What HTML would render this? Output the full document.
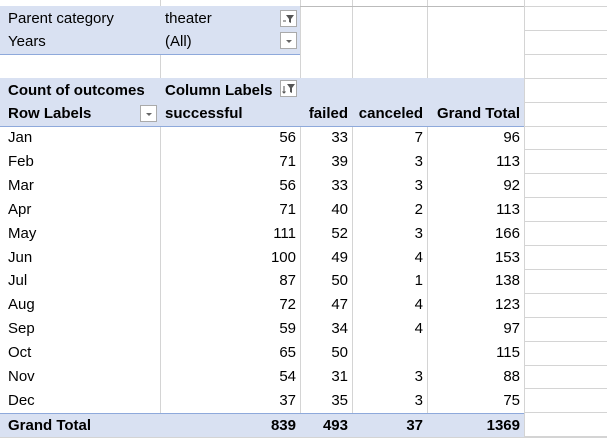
<!DOCTYPE html><html><head><style>
body{margin:0;width:607px;height:447px;overflow:hidden;background:#fff;font-family:"Liberation Sans",sans-serif;font-size:15px;color:#000;position:relative}
.r{position:absolute;left:0;width:607px;height:24px;border-bottom:1px solid #d4d4d4;box-sizing:border-box}
.c{position:absolute;top:0;height:24px;line-height:23px;white-space:nowrap;box-sizing:border-box;padding:0 4px}
.v{position:absolute;top:0;width:1px;height:447px;background:#d4d4d4}
.b{font-weight:bold}
.rt{text-align:right}
.btn{position:absolute;width:17px;height:17px;border:1px solid #aaa;background:#fff;box-sizing:border-box}
</style></head><body>
<div class="v" style="left:160px"></div><div class="v" style="left:300px"></div><div class="v" style="left:352px"></div><div class="v" style="left:427px"></div><div class="v" style="left:524px"></div>
<div style="position:absolute;left:0;top:0;width:607px;height:6px;border-bottom:1px solid #bbb"></div>
<!-- filter area -->
<div style="position:absolute;left:0;top:6px;width:300px;height:48px;background:#d9e1f2;border-bottom:1px solid #8ea9db"></div>
<div class="c" style="left:4px;top:7px">Parent category</div><div class="c" style="left:161px;top:7px">theater</div>
<div class="c" style="left:4px;top:30px">Years</div><div class="c" style="left:161px;top:30px">(All)</div>
<div class="btn" style="left:280px;top:10px"><svg width="15" height="15"><path d="M5 4h8l-3 4v4l-2-1V8z" fill="#555"/><path d="M2 10h3" stroke="#555"/></svg></div>
<div class="btn" style="left:280px;top:32px"><svg width="15" height="15"><path d="M5 7h6l-3 3z" fill="#666"/></svg></div>
<!-- pivot header -->
<div style="position:absolute;left:0;top:78px;width:524px;height:48px;background:#d9e1f2;border-bottom:1px solid #8ea9db"></div>
<div class="c b" style="left:4px;top:79px">Count of outcomes</div><div class="c b" style="left:161px;top:79px">Column Labels</div>
<div class="btn" style="left:280px;top:80px"><svg width="15" height="15"><path d="M6 3h8l-3 4v5l-2-1V7z" fill="#555"/><path d="M3 5v7M1.5 10.5L3 12l1.5-1.5" stroke="#555" fill="none"/></svg></div>
<div class="c b" style="left:4px;top:102px">Row Labels</div>
<div class="btn" style="left:140px;top:105px"><svg width="15" height="15"><path d="M5 7h6l-3 3z" fill="#666"/></svg></div>
<div class="c b" style="left:161px;top:102px">successful</div>
<div class="c b rt" style="left:300px;width:52px;top:102px">failed</div>
<div class="c b rt" style="left:352px;width:75px;top:102px">canceled</div>
<div class="c b rt" style="left:427px;width:97px;top:102px">Grand Total</div>
<div id="d"></div>
<script>
var rows=[["Jan",56,33,7,96],["Feb",71,39,3,113],["Mar",56,33,3,92],["Apr",71,40,2,113],["May",111,52,3,166],["Jun",100,49,4,153],["Jul",87,50,1,138],["Aug",72,47,4,123],["Sep",59,34,4,97],["Oct",65,50,"",115],["Nov",54,31,3,88],["Dec",37,35,3,75]];
var h="";
rows.forEach(function(r,i){var t=126+i*23.9;
h+='<div class="c" style="left:4px;top:'+t+'px">'+r[0]+'</div>'+
'<div class="c rt" style="left:160px;width:140px;top:'+t+'px">'+r[1]+'</div>'+
'<div class="c rt" style="left:300px;width:52px;top:'+t+'px">'+r[2]+'</div>'+
'<div class="c rt" style="left:352px;width:75px;top:'+t+'px">'+r[3]+'</div>'+
'<div class="c rt" style="left:427px;width:97px;top:'+t+'px">'+r[4]+'</div>';});
for(var i=0;i<19;i++){h+='<div style="position:absolute;left:524px;width:83px;height:1px;background:#d4d4d4;top:'+(6+i*23.9)+'px"></div>';}
document.getElementById("d").innerHTML=h;
</script>
<div style="position:absolute;left:0;top:413px;width:524px;height:24px;background:#d9e1f2;border-top:1px solid #8ea9db;box-sizing:border-box"></div>
<div class="c b" style="left:4px;top:414px">Grand Total</div>
<div class="c b rt" style="left:160px;width:140px;top:414px">839</div>
<div class="c b rt" style="left:300px;width:52px;top:414px">493</div>
<div class="c b rt" style="left:352px;width:75px;top:414px">37</div>
<div class="c b rt" style="left:427px;width:97px;top:414px">1369</div>
<div style="position:absolute;left:0;top:437px;width:607px;height:10px;background:#fff;border-top:1px solid #d4d4d4"></div>
</body></html>
